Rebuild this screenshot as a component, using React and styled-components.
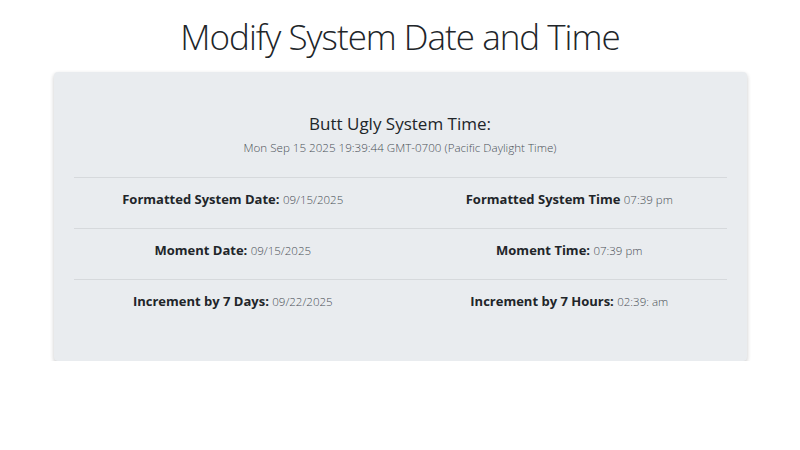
import React from "react";
import styled, { createGlobalStyle } from "styled-components";

const GlobalStyle = createGlobalStyle`
  body {
    margin: 0;
    background: #fff;
    font-family: "Open Sans", "Liberation Sans", sans-serif;
    color: #212529;
  }
`;

const Page = styled.div`
  width: 800px;
  padding-top: 14px;
  display: flex;
  flex-direction: column;
  align-items: center;
`;

const Title = styled.h1`
  margin: 0 0 12px;
  font-family: "Open Sans", sans-serif;
  font-weight: 300;
  font-size: 35px;
  letter-spacing: -1px;
  line-height: 46px;
  color: #212529;
`;

const Card = styled.div`
  width: 693px;
  box-sizing: border-box;
  background: #e9ecef;
  border-radius: 4px;
  box-shadow: 0 2px 4px rgba(0, 0, 0, 0.22);
  padding: 40px 20px 31px;
`;

const Header = styled.div`
  text-align: center;
  padding-bottom: 19px;
`;

const HeaderTitle = styled.div`
  font-size: 17px;
  line-height: 24px;
  font-weight: 400;
`;

const HeaderSub = styled.div`
  font-size: 11.6px;
  line-height: 20px;
  font-weight: 300;
  color: #495057;
  margin-top: 2px;
`;

const Row = styled.div`
  display: grid;
  grid-template-columns: 1fr 1fr;
  border-top: 1px solid #d6d9dc;
  height: 51px;
  box-sizing: border-box;
  padding-top: 11px;
  line-height: 20px;
`;

const Cell = styled.div`
  text-align: center;
  font-size: 13px;
  padding-left: ${(p) => (p.right ? "12px" : "0")};
  padding-right: ${(p) => (p.right ? "0" : "8px")};
`;

const Label = styled.span`
  font-weight: 700;
  color: #212529;
`;

const Value = styled.span`
  font-weight: 300;
  font-size: 11.5px;
  color: #495057;
`;

const rows = [
  [
    ["Formatted System Date:", "09/15/2025"],
    ["Formatted System Time", "07:39 pm"],
  ],
  [
    ["Moment Date:", "09/15/2025"],
    ["Moment Time:", "07:39 pm"],
  ],
  [
    ["Increment by 7 Days:", "09/22/2025"],
    ["Increment by 7 Hours:", "02:39: am"],
  ],
];

const App = () => {
  return (
    <>
      <GlobalStyle />
      <Page>
        <Title>Modify System Date and Time</Title>
        <Card>
          <Header>
            <HeaderTitle>Butt Ugly System Time:</HeaderTitle>
            <HeaderSub>
              Mon Sep 15 2025 19:39:44 GMT-0700 (Pacific Daylight Time)
            </HeaderSub>
          </Header>
          {rows.map((row, i) => (
            <Row key={i}>
              {row.map(([label, value], j) => (
                <Cell key={j} right={j === 1}>
                  <Label>{label}</Label> <Value>{value}</Value>
                </Cell>
              ))}
            </Row>
          ))}
        </Card>
      </Page>
    </>
  );
};

export default App;
